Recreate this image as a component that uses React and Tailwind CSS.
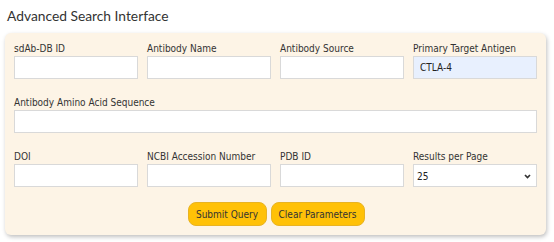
import React from 'react';

const labelCls = 'h-[15px] mb-[1px] flex items-end text-[10px] leading-[12px] text-[#333] whitespace-nowrap';

const Field = ({ label, value = '', autofill = false, wide = false }) => (
  <label className={`flex flex-col ${wide ? 'col-span-4' : ''}`}>
    <span className={labelCls}>{label}</span>
    <input
      readOnly
      value={value}
      className={`h-[23px] border border-[#d9d9d9] px-[6px] text-[10px] text-[#222] outline-none ${autofill ? 'bg-[#e8f0fe]' : 'bg-white'}`}
    />
  </label>
);

const App = () => {
  return (
    <div className="w-[554px] h-[242px] bg-white px-[5px] pt-[4px]" style={{ fontFamily: '"DejaVu Sans Condensed", "DejaVu Sans", sans-serif' }}>
      <h1 className="h-[24px] pl-[2px] text-[13.8px] leading-[24px] text-[#333]" style={{ fontFamily: 'Lato, "Noto Sans", sans-serif' }}>
        Advanced Search Interface
      </h1>
      <div className="mt-[5px] w-[541px] rounded-[6px] bg-[#fdf4e6] px-[9px] pt-[7px] pb-[9px] shadow-[1px_2px_4px_rgba(0,0,0,0.25)]">
        <div className="grid grid-cols-4 gap-x-[9px] gap-y-[15px]">
          <Field label="sdAb-DB ID" />
          <Field label="Antibody Name" />
          <Field label="Antibody Source" />
          <Field label="Primary Target Antigen" value="CTLA-4" autofill />
          <Field label="Antibody Amino Acid Sequence" wide />
          <Field label="DOI" />
          <Field label="NCBI Accession Number" />
          <Field label="PDB ID" />
          <label className="flex flex-col">
            <span className={labelCls}>Results per Page</span>
            <div className="relative h-[23px] border border-[#d9d9d9] bg-white">
              <span className="absolute left-[3px] top-[4px] text-[10px] text-[#222]">25</span>
              <svg className="absolute right-[5px] top-[9px]" width="7" height="5" viewBox="0 0 7 5">
                <path d="M1 1 L3.5 3.5 L6 1" fill="none" stroke="#333" strokeWidth="1.7" />
              </svg>
            </div>
          </label>
        </div>
        <div className="mt-[15px] flex justify-center gap-[4px] pl-[1px]">
          <button className="h-[24px] w-[79px] rounded-[8px] border border-[#e8b323] bg-[#ffc107] text-[10px] text-[#333] whitespace-nowrap">
            Submit Query
          </button>
          <button className="h-[24px] w-[94px] rounded-[8px] border border-[#e8b323] bg-[#ffc107] text-[10px] text-[#333] whitespace-nowrap">
            Clear Parameters
          </button>
        </div>
      </div>
    </div>
  );
};

export default App;
